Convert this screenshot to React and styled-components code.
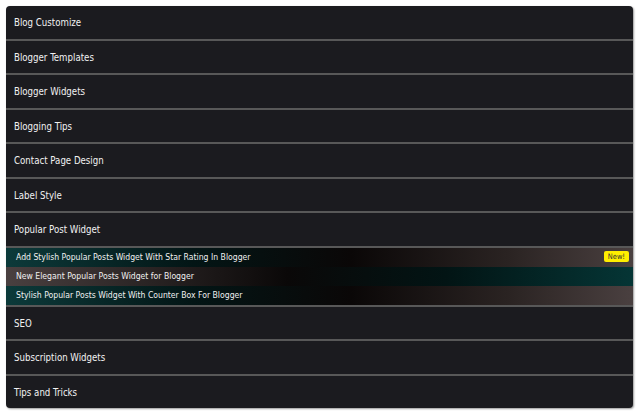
import React from "react";
import styled, { createGlobalStyle } from "styled-components";

const GlobalStyle = createGlobalStyle`
  html, body {
    margin: 0;
    padding: 0;
    background: #ffffff;
  }
  body {
    font-family: "DejaVu Sans Condensed", "DejaVu Sans", Verdana, sans-serif;
  }
`;

const Page = styled.div`
  padding: 6px 7px 3px 6px;
`;

const Panel = styled.ul`
  list-style: none;
  margin: 0;
  padding: 0;
  background: #1b1b1f;
  border-radius: 4px;
  overflow: hidden;
  box-shadow: 1px 1px 2px #9a9a9a;
`;

const Item = styled.li`
  border-bottom: 2px solid #585858;
  &:last-child {
    border-bottom: none;
  }
`;

const Label = styled.div`
  height: 32.5px;
  display: flex;
  align-items: center;
  padding: 1px 8px 0;
  box-sizing: border-box;
  color: #f2f2f2;
  font-size: 9.6px;
  cursor: pointer;
`;

const SubList = styled.ul`
  list-style: none;
  margin: 0;
  padding: 0;
`;

const SubItem = styled.li`
  position: relative;
  height: 19px;
  display: flex;
  align-items: center;
  padding: 0 10px;
  color: #f0f0f0;
  font-size: 8.6px;
  background: ${(p) =>
    p.$flip
      ? "linear-gradient(to right, #4a4040 0%, #0a0808 45%, #021414 70%, #053535 100%)"
      : "linear-gradient(to right, #0c3a3a 0%, #031515 30%, #0a0707 55%, #2a2322 80%, #4a4040 100%)"};
`;

const Badge = styled.span`
  position: absolute;
  right: 4px;
  top: 3px;
  background: #ffee00;
  color: #333;
  font-size: 7.4px;
  padding: 2px 4px;
  border-radius: 2px;
  line-height: 7px;
`;

const categories = [
  "Blog Customize",
  "Blogger Templates",
  "Blogger Widgets",
  "Blogging Tips",
  "Contact Page Design",
  "Label Style",
  "Popular Post Widget",
  "SEO",
  "Subscription Widgets",
  "Tips and Tricks",
];

const posts = [
  { title: "Add Stylish Popular Posts Widget With Star Rating In Blogger", isNew: true },
  { title: "New Elegant Popular Posts Widget for Blogger" },
  { title: "Stylish Popular Posts Widget With Counter Box For Blogger" },
];

export default function App() {
  return (
    <Page>
      <GlobalStyle />
      <Panel>
        {categories.map((name) => (
          <React.Fragment key={name}>
            <Item>
              <Label>{name}</Label>
            </Item>
            {name === "Popular Post Widget" && (
              <Item>
                <SubList>
                  {posts.map((post, i) => (
                    <SubItem key={post.title} $flip={i % 2 === 1}>
                      {post.title}
                      {post.isNew && <Badge>New!</Badge>}
                    </SubItem>
                  ))}
                </SubList>
              </Item>
            )}
          </React.Fragment>
        ))}
      </Panel>
    </Page>
  );
}
